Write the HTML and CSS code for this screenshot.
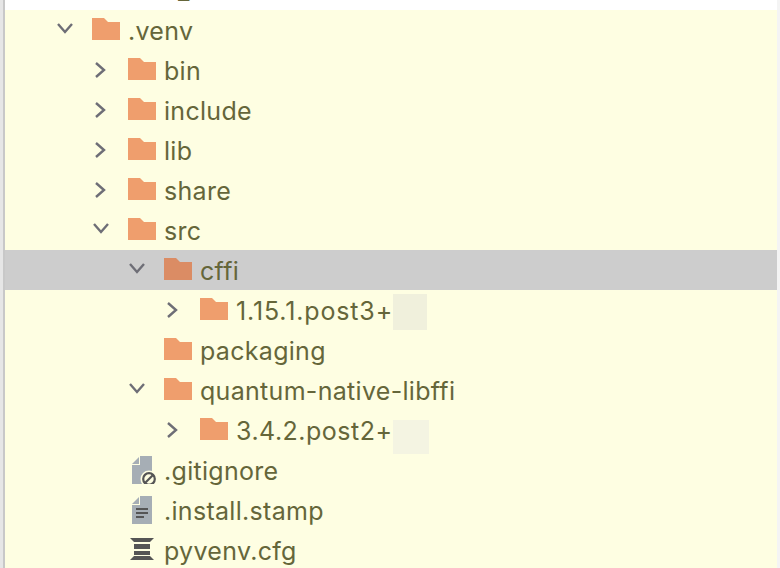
FILE: index.html
```html
<!DOCTYPE html>
<html lang="en">
<head>
  <meta charset="UTF-8">
  <meta name="viewport" content="width=device-width, initial-scale=1.0">
  <title>Project tree</title>
  <link rel="stylesheet" href="styles.css">
</head>
<body>
  <svg class="defs" width="0" height="0">
    <symbol id="folder" viewBox="0 0 28 22"><path d="M0 0H12L16 4H28V22H0Z"/></symbol>
    <symbol id="chev-right" viewBox="0 0 14 18"><path d="M3 2L11 9L3 16" fill="none" stroke-width="2.4"/></symbol>
    <symbol id="chev-down" viewBox="0 0 18 14"><path d="M2 3L9 11L16 3" fill="none" stroke-width="2.4"/></symbol>
  </svg>
  <div class="tree">
    <div class="row row-top"><span class="label top-label">.ruff_cache</span></div>

    <div class="row depth-1">
      <span class="toggle"><svg class="chev-d"><use href="#chev-down"/></svg></span>
      <svg class="folder"><use href="#folder"/></svg>
      <span class="label">.venv</span>
    </div>
    <div class="row depth-2">
      <span class="toggle"><svg class="chev-r"><use href="#chev-right"/></svg></span>
      <svg class="folder"><use href="#folder"/></svg>
      <span class="label">bin</span>
    </div>
    <div class="row depth-2">
      <span class="toggle"><svg class="chev-r"><use href="#chev-right"/></svg></span>
      <svg class="folder"><use href="#folder"/></svg>
      <span class="label">include</span>
    </div>
    <div class="row depth-2">
      <span class="toggle"><svg class="chev-r"><use href="#chev-right"/></svg></span>
      <svg class="folder"><use href="#folder"/></svg>
      <span class="label">lib</span>
    </div>
    <div class="row depth-2">
      <span class="toggle"><svg class="chev-r"><use href="#chev-right"/></svg></span>
      <svg class="folder"><use href="#folder"/></svg>
      <span class="label">share</span>
    </div>
    <div class="row depth-2">
      <span class="toggle"><svg class="chev-d"><use href="#chev-down"/></svg></span>
      <svg class="folder"><use href="#folder"/></svg>
      <span class="label">src</span>
    </div>
    <div class="row depth-3 selected">
      <span class="toggle"><svg class="chev-d"><use href="#chev-down"/></svg></span>
      <svg class="folder"><use href="#folder"/></svg>
      <span class="label">cffi</span>
    </div>
    <div class="row depth-4">
      <span class="toggle"><svg class="chev-r"><use href="#chev-right"/></svg></span>
      <svg class="folder"><use href="#folder"/></svg>
      <span class="label version-a">1.15.1.post3+</span><span class="redact redact-a"></span>
    </div>
    <div class="row depth-3">
      <span class="toggle"></span>
      <svg class="folder"><use href="#folder"/></svg>
      <span class="label">packaging</span>
    </div>
    <div class="row depth-3">
      <span class="toggle"><svg class="chev-d"><use href="#chev-down"/></svg></span>
      <svg class="folder"><use href="#folder"/></svg>
      <span class="label">quantum-native-libffi</span>
    </div>
    <div class="row depth-4">
      <span class="toggle"><svg class="chev-r"><use href="#chev-right"/></svg></span>
      <svg class="folder"><use href="#folder"/></svg>
      <span class="label version-b">3.4.2.post2+</span><span class="redact redact-b"></span>
    </div>
    <div class="row depth-2">
      <span class="toggle"></span>
      <svg class="file" viewBox="0 0 28 28">
        <path d="M12 0H24V28H4V9H12Z" fill="#a6aeb5"/>
        <path d="M11 1V8H4Z" fill="#a6aeb5"/>
        <circle cx="21" cy="23" r="8.5" fill="#fefee2"/>
        <circle cx="21" cy="23" r="5.8" fill="none" stroke="#555" stroke-width="2.2"/>
        <path d="M17 27L25 19" stroke="#555" stroke-width="2.2"/>
      </svg>
      <span class="label">.gitignore</span>
    </div>
    <div class="row depth-2">
      <span class="toggle"></span>
      <svg class="file" viewBox="0 0 28 28">
        <path d="M12 0H24V28H4V9H12Z" fill="#a6aeb5"/>
        <path d="M11 1V8H4Z" fill="#a6aeb5"/>
        <path d="M8 12H20V14H8ZM8 16H20V18H8ZM8 20H16V22H8Z" fill="#555"/>
      </svg>
      <span class="label">.install.stamp</span>
    </div>
    <div class="row depth-2">
      <span class="toggle"></span>
      <svg class="file" viewBox="0 0 28 28">
        <path d="M2 2H26L22 6H6Z" fill="#555"/>
        <path d="M6 8H22V13H6Z" fill="#555"/>
        <path d="M6 15H22V19H6Z" fill="#555"/>
        <path d="M6 20H22L26 24H2Z" fill="#555"/>
      </svg>
      <span class="label">pyvenv.cfg</span>
    </div>
  </div>
</body>
</html>
```

FILE: styles.css
```css
* {
  box-sizing: border-box;
}

body {
  margin: 0;
  padding: 0;
  width: 780px;
  height: 568px;
  overflow: hidden;
  background-color: #fefee2;
  font-family: Inter, "Liberation Sans", sans-serif;
}

.defs {
  position: absolute;
}

.tree {
  margin-left: 5px;
  margin-right: 3px;
  margin-top: -30px;
  box-shadow: -2px 0 0 #c8c8c8, -5px 0 0 #e6e6e6, 3px 0 0 #f4f4f4;
  min-height: 600px;
}

.row {
  display: flex;
  align-items: center;
  height: 40px;
  color: #65663a;
  font-size: 25px;
  letter-spacing: 0.3px;
}

.label {
  padding-top: 2px;
}

.row-top {
  background-color: #ffffff;
  padding-left: 123px;
}

.top-label {
  padding-top: 0;
}

.version-a {
  letter-spacing: 0.85px;
}

.version-b {
  letter-spacing: 0.5px;
}

.depth-1 { padding-left: 46px; }
.depth-2 { padding-left: 82px; }
.depth-3 { padding-left: 118px; }
.depth-4 { padding-left: 154px; }

.toggle {
  width: 41px;
  height: 28px;
  display: flex;
  align-items: center;
  flex-shrink: 0;
}

.chev-d {
  width: 18px;
  height: 14px;
  margin-left: 5px;
  margin-bottom: 4px;
  stroke: #6e6e76;
  fill: none;
}

.chev-r {
  width: 14px;
  height: 18px;
  margin-left: 6px;
  stroke: #6e6e76;
  fill: none;
}

.folder {
  width: 28px;
  height: 22px;
  margin-right: 8px;
  margin-bottom: 2px;
  fill: #ef9e6d;
  flex-shrink: 0;
}

.selected {
  background-color: #cdcdcd;
}

.selected .folder {
  fill: #db8c64;
}

.file {
  width: 28px;
  height: 28px;
  margin-right: 8px;
  flex-shrink: 0;
}

.redact {
  background-color: #f0f0dc;
}

.redact-a {
  width: 34px;
  height: 36px;
  margin-top: 4px;
}

.redact-b {
  width: 36px;
  height: 34px;
  margin-top: 14px;
  background-color: #f4f4e2;
}
```
